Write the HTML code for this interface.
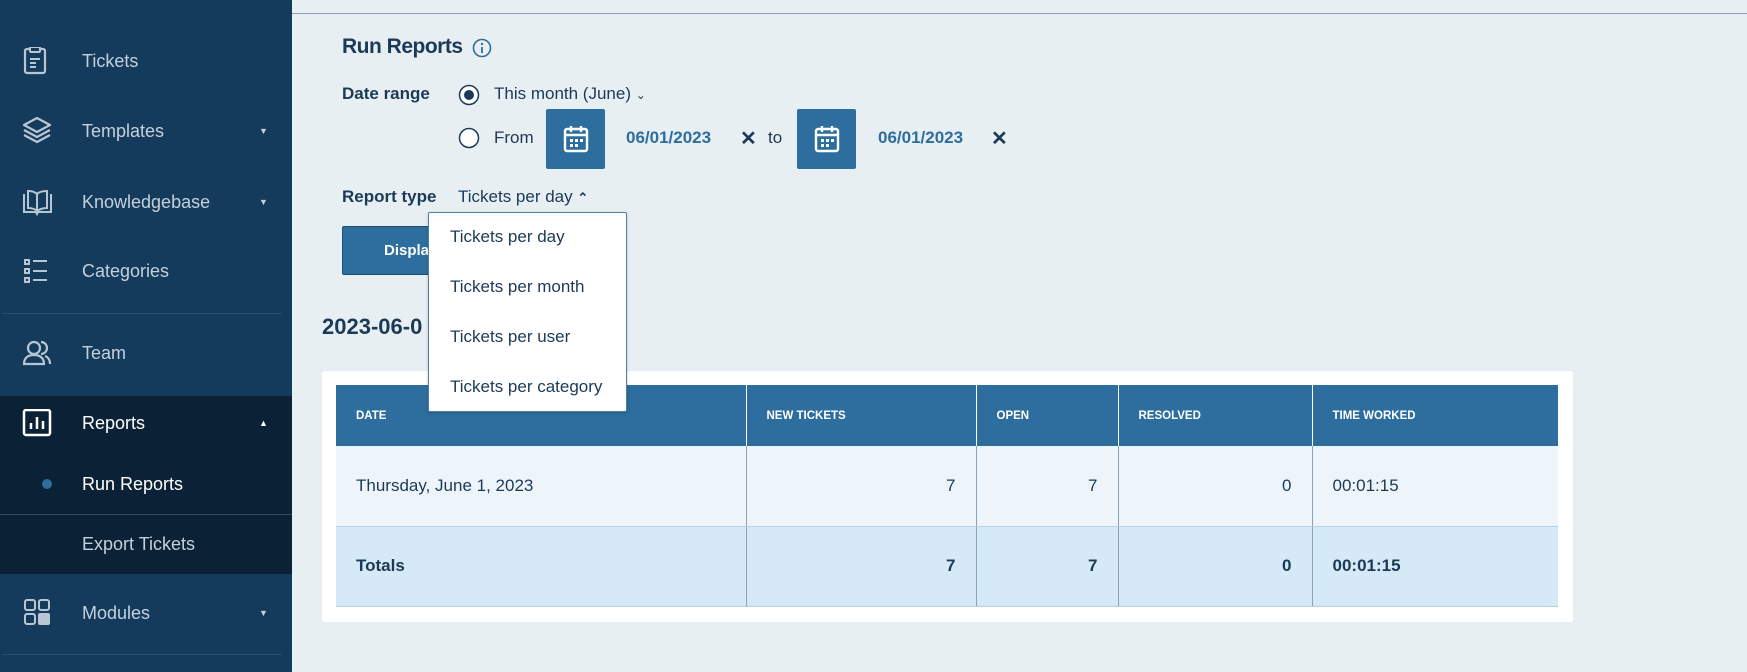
<!DOCTYPE html>
<html><head><meta charset="utf-8"><style>
*{box-sizing:border-box;margin:0;padding:0}
body{width:1747px;height:672px;overflow:hidden;background:#e8eff3;font-family:"Liberation Sans",sans-serif;color:#1b3a57;position:relative}
.sb{position:absolute;left:0;top:0;width:292px;height:672px;background:#143b5c}
.it{position:absolute;left:0;width:292px;height:40px;display:flex;align-items:center;font-size:18px;color:#c4d0dc}
.it .ic{position:absolute;left:22px;top:6px;width:32px;height:28px}
.it .lb{position:absolute;left:82px}
.it .car{position:absolute;left:259px;font-size:9px}
.div{position:absolute;left:2px;width:280px;height:1px;background:#2a4e6e}
.act{position:absolute;left:0;top:396px;width:292px;height:178px;background:#0b2236}
.a{position:absolute;font-size:17px}
.cal{position:absolute;width:59px;height:60px;background:#2d6e9e;border-radius:2px;top:109px}
.cal svg{position:absolute;left:17px;top:16px}
.card{position:absolute;left:322px;top:371px;width:1251px;height:251px;background:#fff;border-radius:3px}
table{position:absolute;left:336px;top:385px;width:1222px;border-collapse:collapse;font-size:17px}
th{background:#2d6e9e;color:#fff;font-size:11.5px;font-weight:bold;text-align:left;height:61px;padding-left:20px;border-left:1px solid #fff}
td{height:80px;padding:0 20px;border-left:1px solid #8aa3b8;border-bottom:1px solid #b6cfe2}
th:first-child,td:first-child{border-left:none}
tr.r1 td{background:#edf5fb}
tr.r2 td{background:#d6e9f6;font-weight:bold}
.num{text-align:right}
.dd{position:absolute;left:428px;top:212px;width:199px;height:200px;background:#fff;border:1px solid #4f7ea6;border-radius:2px;box-shadow:0 1px 3px rgba(0,0,0,.2)}
.dd div{position:absolute;left:21px;font-size:17px;color:#1b3a57}
</style></head><body>
<div class="sb">
 <div class="it" style="top:41px"><svg class="ic" viewBox="0 0 32 28"><rect x="3" y="2" width="20" height="24" rx="2" fill="none" stroke="#b8c6d3" stroke-width="2.2"/><rect x="8" y="0" width="10" height="5" rx="1" fill="#143b5c" stroke="#b8c6d3" stroke-width="2"/><path d="M8 12h10M8 16h6M8 20h6" stroke="#b8c6d3" stroke-width="2"/></svg><span class="lb">Tickets</span></div>
 <div class="it" style="top:111px"><svg class="ic" viewBox="0 0 32 28"><path d="M15 1L2 8l13 7 13-7z M2 13l13 7 13-7 M2 18l13 7 13-7" fill="none" stroke="#b8c6d3" stroke-width="2.2" stroke-linejoin="round"/></svg><span class="lb">Templates</span><span class="car">▼</span></div>
 <div class="it" style="top:182px"><svg class="ic" viewBox="0 0 32 28"><path d="M2 6v18h12l1 2 1-2h13V6 M6 3v17c4 0 7 1 9 3V6C13 4 10 3 6 3z M25 3v17c-4 0-7 1-10 3V6c2-2 5-3 10-3z" fill="none" stroke="#b8c6d3" stroke-width="2"/></svg><span class="lb">Knowledgebase</span><span class="car">▼</span></div>
 <div class="it" style="top:251px"><svg class="ic" viewBox="0 0 32 28"><path d="M3 3h4v4H3zM3 12h4v4H3zM3 21h4v4H3z M11 4h14M11 14h14M11 23h14" fill="none" stroke="#b8c6d3" stroke-width="2"/></svg><span class="lb">Categories</span></div>
 <div class="div" style="top:313px"></div>
 <div class="it" style="top:333px"><svg class="ic" viewBox="0 0 32 28"><circle cx="12" cy="9" r="6" fill="none" stroke="#b8c6d3" stroke-width="2.2"/><path d="M2 25c0-6 4-9 10-9s10 3 10 9z" fill="none" stroke="#b8c6d3" stroke-width="2.2"/><path d="M19 3a6 6 0 010 12 M23 17c3 1 5 4 5 8" fill="none" stroke="#b8c6d3" stroke-width="2.2"/></svg><span class="lb">Team</span></div>
 <div class="act"></div>
 <div class="it" style="top:403px;color:#fff"><svg class="ic" viewBox="0 0 32 28"><rect x="2" y="1" width="26" height="25" rx="2" fill="none" stroke="#fff" stroke-width="2.5"/><path d="M9 20v-6M15 20V8M21 20v-8" stroke="#fff" stroke-width="2.5"/></svg><span class="lb">Reports</span><span class="car">▲</span></div>
 <div class="it" style="top:464px;color:#fff"><span style="position:absolute;left:42px;width:10px;height:10px;border-radius:50%;background:#2d6e9e"></span><span class="lb">Run Reports</span></div>
 <div class="div" style="top:514px;left:0;width:292px;background:#34495c"></div>
 <div class="it" style="top:524px"><span class="lb">Export Tickets</span></div>
 <div class="it" style="top:593px"><svg class="ic" viewBox="0 0 32 28"><rect x="3" y="1" width="10" height="10" rx="2" fill="none" stroke="#b8c6d3" stroke-width="2"/><rect x="17" y="1" width="10" height="10" rx="2" fill="none" stroke="#b8c6d3" stroke-width="2"/><rect x="3" y="15" width="10" height="10" rx="2" fill="none" stroke="#b8c6d3" stroke-width="2"/><rect x="16" y="14" width="12" height="12" rx="2" fill="#b8c6d3"/></svg><span class="lb">Modules</span><span class="car">▼</span></div>
 <div class="div" style="top:654px"></div>
</div>
<div style="position:absolute;left:292px;top:13px;width:1455px;height:1px;background:#8c9fb2"></div>

<div class="a" style="left:342px;top:35px;font-size:21px;font-weight:bold;letter-spacing:-0.5px">Run Reports</div>
<svg style="position:absolute;left:472px;top:38px" width="20" height="20" viewBox="0 0 20 20"><circle cx="10" cy="10" r="8.5" fill="none" stroke="#2d6e9e" stroke-width="1.6"/><circle cx="10" cy="6" r="1.2" fill="#2d6e9e"/><path d="M10 9v6" stroke="#2d6e9e" stroke-width="1.8"/></svg>

<div class="a" style="left:342px;top:84px;font-weight:bold">Date range</div>
<svg style="position:absolute;left:458px;top:84px" width="22" height="22"><circle cx="11" cy="11" r="9.5" fill="#fff" stroke="#1b3a57" stroke-width="1.5"/><circle cx="11" cy="11" r="5" fill="#1b3a57"/></svg>
<div class="a" style="left:494px;top:84px">This month (June) <span style="font-size:12px">&#8964;</span></div>
<svg style="position:absolute;left:458px;top:127px" width="22" height="22"><circle cx="11" cy="11" r="9.5" fill="#fff" stroke="#1b3a57" stroke-width="1.5"/></svg>
<div class="a" style="left:494px;top:128px">From</div>
<div class="cal" style="left:546px"><svg width="26" height="28" viewBox="0 0 26 28"><rect x="2" y="4" width="22" height="22" rx="2" fill="none" stroke="#fff" stroke-width="2.4"/><path d="M2 10h22M8 1v6M18 1v6" stroke="#fff" stroke-width="2.4"/><path d="M7 14h3v3H7zM12 14h3v3h-3zM17 14h3v3h-3zM7 19h3v3H7zM12 19h3v3h-3z" fill="#fff"/></svg></div>
<div class="a" style="left:626px;top:128px;color:#2d6e9e;font-weight:bold">06/01/2023</div>
<div class="a" style="left:740px;top:126px;font-size:20px;font-weight:bold">✕</div>
<div class="a" style="left:768px;top:128px">to</div>
<div class="cal" style="left:797px"><svg width="26" height="28" viewBox="0 0 26 28"><rect x="2" y="4" width="22" height="22" rx="2" fill="none" stroke="#fff" stroke-width="2.4"/><path d="M2 10h22M8 1v6M18 1v6" stroke="#fff" stroke-width="2.4"/><path d="M7 14h3v3H7zM12 14h3v3h-3zM17 14h3v3h-3zM7 19h3v3H7zM12 19h3v3h-3z" fill="#fff"/></svg></div>
<div class="a" style="left:878px;top:128px;color:#2d6e9e;font-weight:bold">06/01/2023</div>
<div class="a" style="left:991px;top:126px;font-size:20px;font-weight:bold">✕</div>

<div class="a" style="left:342px;top:187px;font-weight:bold">Report type</div>
<div class="a" style="left:458px;top:187px">Tickets per day <span style="font-size:13px;font-weight:bold">&#8963;</span></div>

<div style="position:absolute;left:342px;top:226px;width:120px;height:49px;background:#2d6e9e;border-radius:2px;border:1px solid #1d4f75"></div>
<div class="a" style="left:384px;top:242px;color:#fff;font-weight:bold;font-size:15px">Displa</div>

<div class="a" style="left:322px;top:314px;font-size:22px;font-weight:bold">2023-06-0</div>

<div class="card"></div>
<table>
<tr><th style="width:410px">DATE</th><th style="width:230px">NEW TICKETS</th><th style="width:142px">OPEN</th><th style="width:194px">RESOLVED</th><th>TIME WORKED</th></tr>
<tr class="r1"><td>Thursday, June 1, 2023</td><td class="num">7</td><td class="num">7</td><td class="num">0</td><td>00:01:15</td></tr>
<tr class="r2"><td>Totals</td><td class="num">7</td><td class="num">7</td><td class="num">0</td><td>00:01:15</td></tr>
</table>

<div class="dd">
 <div style="top:14px">Tickets per day</div>
 <div style="top:64px">Tickets per month</div>
 <div style="top:114px">Tickets per user</div>
 <div style="top:164px">Tickets per category</div>
</div>
</body></html>
